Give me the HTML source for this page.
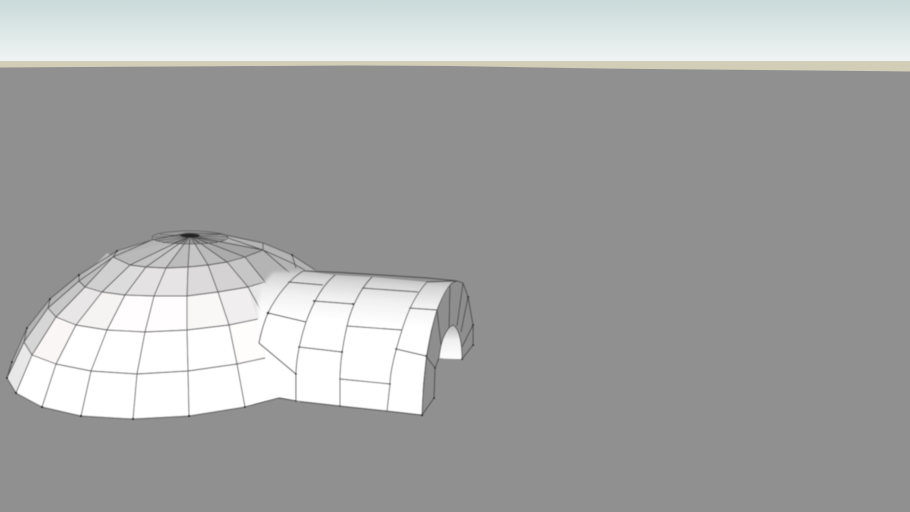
<!DOCTYPE html>
<html><head><meta charset="utf-8"><style>
html,body{margin:0;padding:0;width:910px;height:512px;overflow:hidden;background:#909090}
svg{display:block}
</style></head><body>
<svg width="910" height="512" viewBox="0 0 910 512" xmlns="http://www.w3.org/2000/svg">
<defs>
<linearGradient id="sky" x1="0" y1="0" x2="0" y2="1"><stop offset="0" stop-color="#c9dad9"/><stop offset="1" stop-color="#eff3f3"/></linearGradient>
<linearGradient id="tun" gradientUnits="userSpaceOnUse" x1="360" y1="272" x2="356" y2="322"><stop offset="0" stop-color="#b4b4b4"/><stop offset=".2" stop-color="#d6d6d6"/><stop offset=".55" stop-color="#f1f1f1"/><stop offset="1" stop-color="#fff"/></linearGradient>
<linearGradient id="inner" x1="0" y1="0" x2="0" y2="1"><stop offset="0" stop-color="#b4b4b4"/><stop offset=".45" stop-color="#f0f0f0"/><stop offset="1" stop-color="#fff"/></linearGradient>
<filter id="soft" x="-5%" y="-5%" width="110%" height="110%"><feGaussianBlur stdDeviation="0.45"/></filter>
<filter id="soft2" x="-20%" y="-20%" width="140%" height="140%"><feGaussianBlur stdDeviation="1.6"/></filter>
</defs>
<rect width="910" height="61" fill="url(#sky)"/>
<rect y="61" width="910" height="12" fill="#d1cdb6"/>
<polygon points="0,67.5 180,66.5 350,65.5 450,66 600,68.500 760,70 910,71.5 910,512 0,512" fill="#909090"/>

<g filter="url(#soft)">
<polygon points="7,378 12,362 27,328 50,299 79,275 117,251 152,240 187,233 220,234 263,243 292,255 315,270 300,330 279,398 245,407 189,416 133,419 81,416 42,407 16,393" fill="#b4b4b4"/>
<g stroke="none">
<polygon points="113,257 130,265 190,236" fill="#b9b9b9"/>
<polygon points="130,265 146,267 190,236" fill="#c4c4c4"/>
<polygon points="146,267 166,268 190,236" fill="#c8c8c8"/>
<polygon points="166,268 188,267 190,236" fill="#bcbcbc"/>
<polygon points="188,267 208,265 190,236" fill="#c6c6c6"/>
<polygon points="208,265 227,262 190,236" fill="#bbb"/>
<polygon points="227,262 245,257 190,236" fill="#ababab"/>
<polygon points="245,257 263,250 190,236" fill="#a4a4a4"/>
<polygon points="79,281 85,287 113,257 107,253" fill="#bdbdbd"/>
<polygon points="85,287 102,292 130,265 113,257" fill="#d0d0d0"/>
<polygon points="102,292 125,295 146,267 130,265" fill="#dcdcdc"/>
<polygon points="125,295 154,296 166,268 146,267" fill="#e4e2e2"/>
<polygon points="154,296 187,296 188,267 166,268" fill="#e6e4e4"/>
<polygon points="187,296 218,292 208,265 188,267" fill="#dcdada"/>
<polygon points="218,292 248,287 227,262 208,265" fill="#d4d2d2"/>
<polygon points="248,287 265,282 245,257 227,262" fill="#c6c6c6"/>
<polygon points="48,308 56,317 85,287 79,281" fill="#c8c8c8"/>
<polygon points="56,317 76,325 102,292 85,287" fill="#e8e6e6"/>
<polygon points="76,325 107,330 125,295 102,292" fill="#f6f3f3"/>
<polygon points="107,330 145,332 154,296 125,295" fill="#fffdfd"/>
<polygon points="145,332 187,330 187,296 154,296" fill="#fffdfd"/>
<polygon points="187,330 229,325 218,292 187,296" fill="#faf7f7"/>
<polygon points="229,325 258,319 248,287 218,292" fill="#f0eeee"/>
<polygon points="258,319 275,315 265,282 248,287" fill="#e6e6e6"/>
<polygon points="24,342 32,355 56,317 48,308" fill="#d6d6d6"/>
<polygon points="32,355 56,364 76,325 56,317" fill="#fbf6f6"/>
<polygon points="56,364 91,371 107,330 76,325" fill="#fff"/>
<polygon points="91,371 137,374 145,332 107,330" fill="#fff"/>
<polygon points="137,374 188,371 187,330 145,332" fill="#fff"/>
<polygon points="188,371 237,364 229,325 187,330" fill="#fff"/>
<polygon points="237,364 265,358 258,319 229,325" fill="#fffcfc"/>
<polygon points="265,358 290,352 275,315 258,319" fill="#fff"/>
<polygon points="7,378 16,393 32,355 24,342" fill="#e8e8e8"/>
<polygon points="16,393 42,407 81,416 133,419 189,416 245,407 279,398 300,402 300,345 265,358 237,364 188,371 137,374 91,371 56,364 32,355" fill="#fff"/>
</g>
<ellipse cx="190" cy="237.5" rx="38" ry="6.5" fill="#9a9a9a" stroke="#555" stroke-width=".7"/>
<g fill="none" stroke="#4a4a4a" stroke-width=".9" stroke-linejoin="round">
<polyline points="24,342 32,355 56,364 91,371 137,374 188,371 237,364 265,358"/>
<polyline points="48,308 56,317 76,325 107,330 145,332 187,330 229,325 258,319"/>
<polyline points="79,281 85,287 102,292 125,295 154,296 187,296 218,292 248,287 265,282"/>
<polyline points="113,257 130,265 146,267 166,268 188,267 208,265 227,262 245,257 263,250"/>
<polyline points="7,378 24,342 48,308 79,281 113,257 152,240"/>
<polyline points="16,393 32,355 56,317 85,287 113,257"/>
<polyline points="42,407 56,364 76,325 102,292 130,265 190,236"/>
<polyline points="81,416 91,371 107,330 125,295 146,267 190,236"/>
<polyline points="133,419 137,374 145,332 154,296 166,268 190,236"/>
<polyline points="189,416 188,371 187,330 187,296 188,267 190,236"/>
<polyline points="245,407 237,364 229,325 218,292 208,265 190,236"/>
<polyline points="227,262 248,287 258,305 266,318"/>
<polyline points="190,236 227,262"/>
<polyline points="190,236 245,257 265,282 275,298"/>
<polyline points="190,236 263,250 292,275"/>
<polyline points="7,378 12,362 27,328 50,299 79,275 117,251 152,240 187,233 220,234 263,243 292,255 315,270" stroke="#555"/>
<polyline points="7,378 16,393 42,407 81,416 133,419 189,416 245,407" stroke="#555"/>
<polyline points="117,251 113,257"/><polyline points="79,275 79,281"/><polyline points="50,299 48,308"/><polyline points="27,328 24,342"/><polyline points="12,362 7,378"/>
<polyline points="228,238 263,250 292,263 305,270"/>
<polyline points="263,243 263,250"/><polyline points="292,255 296,268"/>
</g>
<g stroke="#3a3a3a" stroke-width=".45" fill="none">
<path d="M190,236L156,241M190,236L163,243M190,236L172,243.5M190,236L181,244M190,236L199,244M190,236L208,243.5M190,236L217,243M190,236L225,240M190,236L160,234.5M190,236L220,234.5M190,236L153,237M190,236L228,237"/>
</g>
<ellipse cx="190" cy="235.5" rx="10" ry="2" fill="#222"/>
</g>
<!-- soft left part of tunnel -->
<polygon points="273,272 263,284 258,303 259,343 280,350 300,300 305,271" fill="url(#tun)" filter="url(#soft2)"/>
<g filter="url(#soft)">
<polygon points="303,270.500 287,274 272,292 262,325 259,343 296,374 296,401 340,406 387,411 422,415 423,385 426,356 431,330 437,310 445,294 452,283 457,281" fill="url(#tun)"/>
<polygon points="303,271 340,272.500 380,275 427,278 457,281 427,282 372,277 335,275" fill="#939393"/>
<polygon points="422,415 434,398 435,368 439,358 444,338 453,325 459,338 462,359 463,358 473,345 473,325 468,297 463,283 457,281 452,283 445,294 437,310 431,330 426,356 423,385" fill="#8e8e8e"/>
<path d="M439,358C441,340 446,328 453,325C459,328 462,342 462,359C454,359 446,359 439,358Z" fill="url(#inner)"/>
<g fill="none" stroke="#454545" stroke-width=".9" stroke-linejoin="round">
<path d="M439,358C441,340 446,328 453,325C459,328 462,342 462,359"/>
<path d="M422,415L434,398L435,368L439,358M462,359L473,345L473,325L468,297L463,283L457,281"/>
<path d="M426,356L435,368M437,310L441,345M450,286L449,328M463,283L457,326M468,297L461,332M473,325L462,347"/>
<path d="M422,415C423,385 426,345 437,310C442,297 447,288 452,283L457,281"/>
<path d="M303,271C291,278 276,296 268,313C264,322 261,333 259,343"/>
<path d="M335,275C324,284 314,300 306,322C301,337 296,358 296,374L296,401"/>
<path d="M372,277C362,287 352,304 347,326C343,344 340,362 340,379L340,406"/>
<path d="M427,282C417,293 408,310 402,330C396,349 390,370 390,384L387,411"/>
<path d="M288,282L323,285M314,301L353,304M362,288L418,292M409,308L437,310M268,313L306,322M347,326L402,330M299,347L342,352M396,349L426,356M340,379L390,384"/>
<path d="M259,343L296,374M296,401L340,406L387,411L422,415M279,398L296,401M245,407L279,398"/>
<path d="M303,271L340,272.500L380,275L427,278L457,281M427,282L457,281"/>
</g>
<g fill="#111">
<circle cx="268" cy="313" r="1.3"/><circle cx="314" cy="301" r="1"/><circle cx="353" cy="304" r="1"/><circle cx="299" cy="347" r=".9"/><circle cx="342" cy="352" r="1.1"/><circle cx="296" cy="374" r=".9"/><circle cx="340" cy="379" r=".8"/><circle cx="390" cy="384" r=".9"/><circle cx="422" cy="415" r="1"/><circle cx="434" cy="398" r=".9"/><circle cx="435" cy="368" r=".8"/><circle cx="426" cy="356" r=".9"/><circle cx="396" cy="349" r=".9"/><circle cx="473" cy="345" r=".9"/><circle cx="473" cy="325" r=".9"/><circle cx="468" cy="297" r=".9"/><circle cx="462" cy="359" r=".9"/><circle cx="296" cy="401" r=".8"/><circle cx="340" cy="406" r=".7"/>
<circle cx="16" cy="393" r=".9"/><circle cx="42" cy="407" r=".9"/><circle cx="81" cy="416" r=".9"/><circle cx="133" cy="419" r=".9"/><circle cx="189" cy="416" r=".9"/><circle cx="245" cy="407" r=".8"/><circle cx="7" cy="378" r=".8"/><circle cx="12" cy="362" r=".8"/><circle cx="27" cy="328" r=".8"/><circle cx="50" cy="299" r=".8"/><circle cx="79" cy="275" r=".8"/><circle cx="117" cy="251" r=".7"/><circle cx="292" cy="255" r=".7"/>
</g>
</g>
</svg>
</body></html>
